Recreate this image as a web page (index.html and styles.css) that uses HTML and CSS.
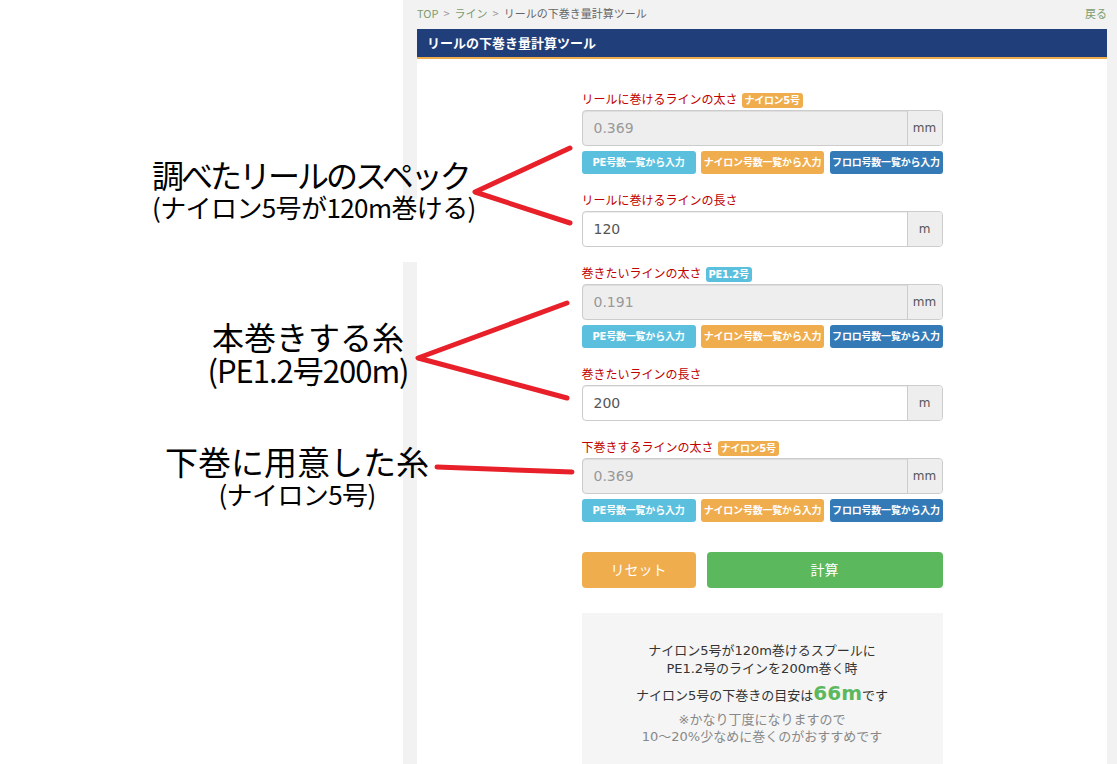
FILE: index.html
```html
<!DOCTYPE html>
<html lang="ja">
<head>
<meta charset="utf-8">
<title>リールの下巻き量計算ツール</title>
<link rel="stylesheet" href="styles.css">
</head>
<body>
<div class="page">
  <div class="annot-col"></div>
  <div class="site">
    <div class="breadcrumb">
      <div class="crumbs"><a class="crumb-link">TOP</a><span class="sep">&gt;</span><a class="crumb-link">ライン</a><span class="sep">&gt;</span><span class="current">リールの下巻き量計算ツール</span></div>
      <a class="crumb-link">戻る</a>
    </div>
    <div class="panel">
      <h1 class="panel-title">リールの下巻き量計算ツール</h1>
      <div class="form">
        <div class="field">
          <div class="field-label">リールに巻けるラインの太さ<span class="badge badge-orange">ナイロン5号</span></div>
          <div class="input-group readonly"><div class="input-value">0.369</div><div class="addon">mm</div></div>
          <div class="pick-row"><span class="pick pick-pe">PE号数一覧から入力</span><span class="pick pick-ny">ナイロン号数一覧から入力</span><span class="pick pick-fl">フロロ号数一覧から入力</span></div>
        </div>
        <div class="field">
          <div class="field-label">リールに巻けるラインの長さ</div>
          <div class="input-group"><div class="input-value">120</div><div class="addon">m</div></div>
        </div>
        <div class="field">
          <div class="field-label">巻きたいラインの太さ<span class="badge badge-blue">PE1.2号</span></div>
          <div class="input-group readonly"><div class="input-value">0.191</div><div class="addon">mm</div></div>
          <div class="pick-row"><span class="pick pick-pe">PE号数一覧から入力</span><span class="pick pick-ny">ナイロン号数一覧から入力</span><span class="pick pick-fl">フロロ号数一覧から入力</span></div>
        </div>
        <div class="field">
          <div class="field-label">巻きたいラインの長さ</div>
          <div class="input-group"><div class="input-value">200</div><div class="addon">m</div></div>
        </div>
        <div class="field">
          <div class="field-label">下巻きするラインの太さ<span class="badge badge-orange">ナイロン5号</span></div>
          <div class="input-group readonly"><div class="input-value">0.369</div><div class="addon">mm</div></div>
          <div class="pick-row"><span class="pick pick-pe">PE号数一覧から入力</span><span class="pick pick-ny">ナイロン号数一覧から入力</span><span class="pick pick-fl">フロロ号数一覧から入力</span></div>
        </div>
        <div class="actions">
          <span class="btn btn-reset">リセット</span>
          <span class="btn btn-calc">計算</span>
        </div>
        <div class="result">
          <p class="result-line">ナイロン5号が120m巻けるスプールに</p>
          <p class="result-line">PE1.2号のラインを200m巻く時</p>
          <p class="result-line result-main">ナイロン5号の下巻きの目安は<strong class="result-num">66m</strong>です</p>
          <p class="result-note">※かなり丁度になりますので</p>
          <p class="result-note">10～20%少なめに巻くのがおすすめです</p>
        </div>
      </div>
    </div>
  </div>
</div>

<div class="annotations">
  <svg class="annot-svg" width="1117" height="764" viewBox="0 0 1117 764">
    <rect x="403" y="199" width="14" height="63" fill="#ffffff"/>
    <g fill="none" stroke="#e8202a" stroke-width="5" stroke-linecap="round" stroke-linejoin="round">
      <polyline points="570,148 475,192 570,223"/>
      <polyline points="567,303 418,358 567,398"/>
      <line x1="437" y1="467" x2="572" y2="472"/>
    </g>
  </svg>
  <div class="note note-1"><div class="note-big tight">調べたリールのスペック</div><div class="note-small">(ナイロン5号が120m巻ける)</div></div>
  <div class="note note-2"><div class="note-big">本巻きする糸</div><div class="note-mid">(PE1.2号200m)</div></div>
  <div class="note note-3"><div class="note-big">下巻に用意した糸</div><div class="note-small">(ナイロン5号)</div></div>
</div>
</body>
</html>
```
FILE: styles.css
```css
* { box-sizing: border-box; }
html, body {
  margin: 0;
  padding: 0;
  width: 1117px;
  height: 764px;
  overflow: hidden;
  background: #ffffff;
  font-family: "DejaVu Sans", "Noto Sans CJK JP", sans-serif;
}
.page {
  display: flex;
  height: 764px;
}
.annot-col {
  width: 403px;
  flex: none;
  background: #ffffff;
}
.site {
  flex: 1;
  background: #f2f2f2;
  padding: 0 10px 0 14px;
  display: flex;
  flex-direction: column;
  overflow: hidden;
}
.breadcrumb {
  flex: none;
  height: 29px;
  padding-top: 5px;
  display: flex;
  justify-content: space-between;
  font-family: "Noto Sans CJK JP", sans-serif;
  font-size: 11px;
  line-height: 16px;
  color: #777;
}
.crumbs { display: flex; gap: 5px; }
.crumb-link { color: #7c9c6e; }
.sep { color: #999; }
.current { color: #666; }
.panel {
  flex: 1;
  background: #ffffff;
}
.panel-title {
  margin: 0;
  height: 30px;
  background: #1f3e7a;
  border-bottom: 2px solid #f0ad4e;
  color: #ffffff;
  font-family: "Noto Sans CJK JP", sans-serif;
  font-size: 13px;
  font-weight: 700;
  line-height: 28px;
  padding-left: 10px;
}
.form {
  width: 361px;
  margin: 0 auto;
  padding-top: 34px;
}
.field { margin-bottom: 20px; }
.field-label {
  display: flex;
  align-items: center;
  gap: 4px;
  height: 15px;
  margin-bottom: 2px;
  font-size: 12px;
  color: #c00000;
  line-height: 15px;
}
.badge {
  font-size: 10px;
  font-weight: 700;
  color: #ffffff;
  padding: 0 3px;
  border-radius: 3px;
  line-height: 15px;
  height: 15px;
  letter-spacing: -0.3px;
}
.badge-orange { background: #f0ad4e; }
.badge-blue { background: #5bc0de; }
.input-group {
  display: flex;
  height: 36px;
  border: 1px solid #cccccc;
  border-radius: 4px;
  overflow: hidden;
  background: #ffffff;
  box-shadow: inset 0 1px 1px rgba(0,0,0,0.075);
}
.input-group.readonly { background: #eeeeee; }
.input-value {
  flex: 1;
  padding-left: 11px;
  font-size: 14px;
  line-height: 34px;
  color: #555;
}
.readonly .input-value { color: #999; }
.addon {
  width: 35px;
  border-left: 1px solid #cccccc;
  background: #eeeeee;
  text-align: center;
  font-size: 12px;
  line-height: 34px;
  color: #555;
}
.pick-row {
  display: grid;
  grid-template-columns: 114px 123px 1fr;
  gap: 5.5px;
  margin-top: 5px;
}
.pick {
  height: 23px;
  border-radius: 3px;
  color: #ffffff;
  font-size: 10px;
  font-weight: 700;
  text-align: center;
  line-height: 23px;
  white-space: nowrap;
  letter-spacing: -0.2px;
}
.pick-pe { background: #5bc0de; }
.pick-ny { background: #f0ad4e; }
.pick-fl { background: #337ab7; }
.actions {
  display: grid;
  grid-template-columns: 114px 1fr;
  gap: 11px;
  margin-top: 30px;
}
.btn {
  height: 36px;
  border-radius: 4px;
  color: #ffffff;
  text-align: center;
  line-height: 36px;
  font-size: 14px;
}
.btn-reset { background: #f0ad4e; }
.btn-calc { background: #5cb85c; }
.result {
  margin-top: 25px;
  background: #f5f5f5;
  padding: 29px 0 30px;
  text-align: center;
  font-size: 13px;
}
.result p { margin: 0; }
.result-line { color: #333; line-height: 18px; }
.result-main { line-height: 30px; }
.result-num {
  color: #5cb85c;
  font-size: 20px;
  font-weight: 700;
}
.result-note { color: #888; line-height: 17px; }

.annotations {
  position: absolute;
  left: 0;
  top: 0;
  width: 1117px;
  height: 764px;
  pointer-events: none;
}
.annot-svg { position: absolute; left: 0; top: 0; }
.note {
  position: absolute;
  color: #000;
  font-family: "Noto Sans CJK JP", sans-serif;
  white-space: nowrap;
}
.note-big { font-size: 32px; line-height: 36px; }
.note-big.tight { letter-spacing: -3px; }
.note-small { font-size: 26px; line-height: 30px; letter-spacing: -0.6px; }
.note-mid { font-size: 31px; line-height: 32px; letter-spacing: -1px; }
.note-1 { left: 152px; top: 156px; }
.note-2 { left: 196px; top: 318px; text-align: center; width: 224px; }
.note-3 { left: 160px; top: 443px; text-align: center; width: 274px; }
.note-3 .note-big { font-size: 33px; }
```
